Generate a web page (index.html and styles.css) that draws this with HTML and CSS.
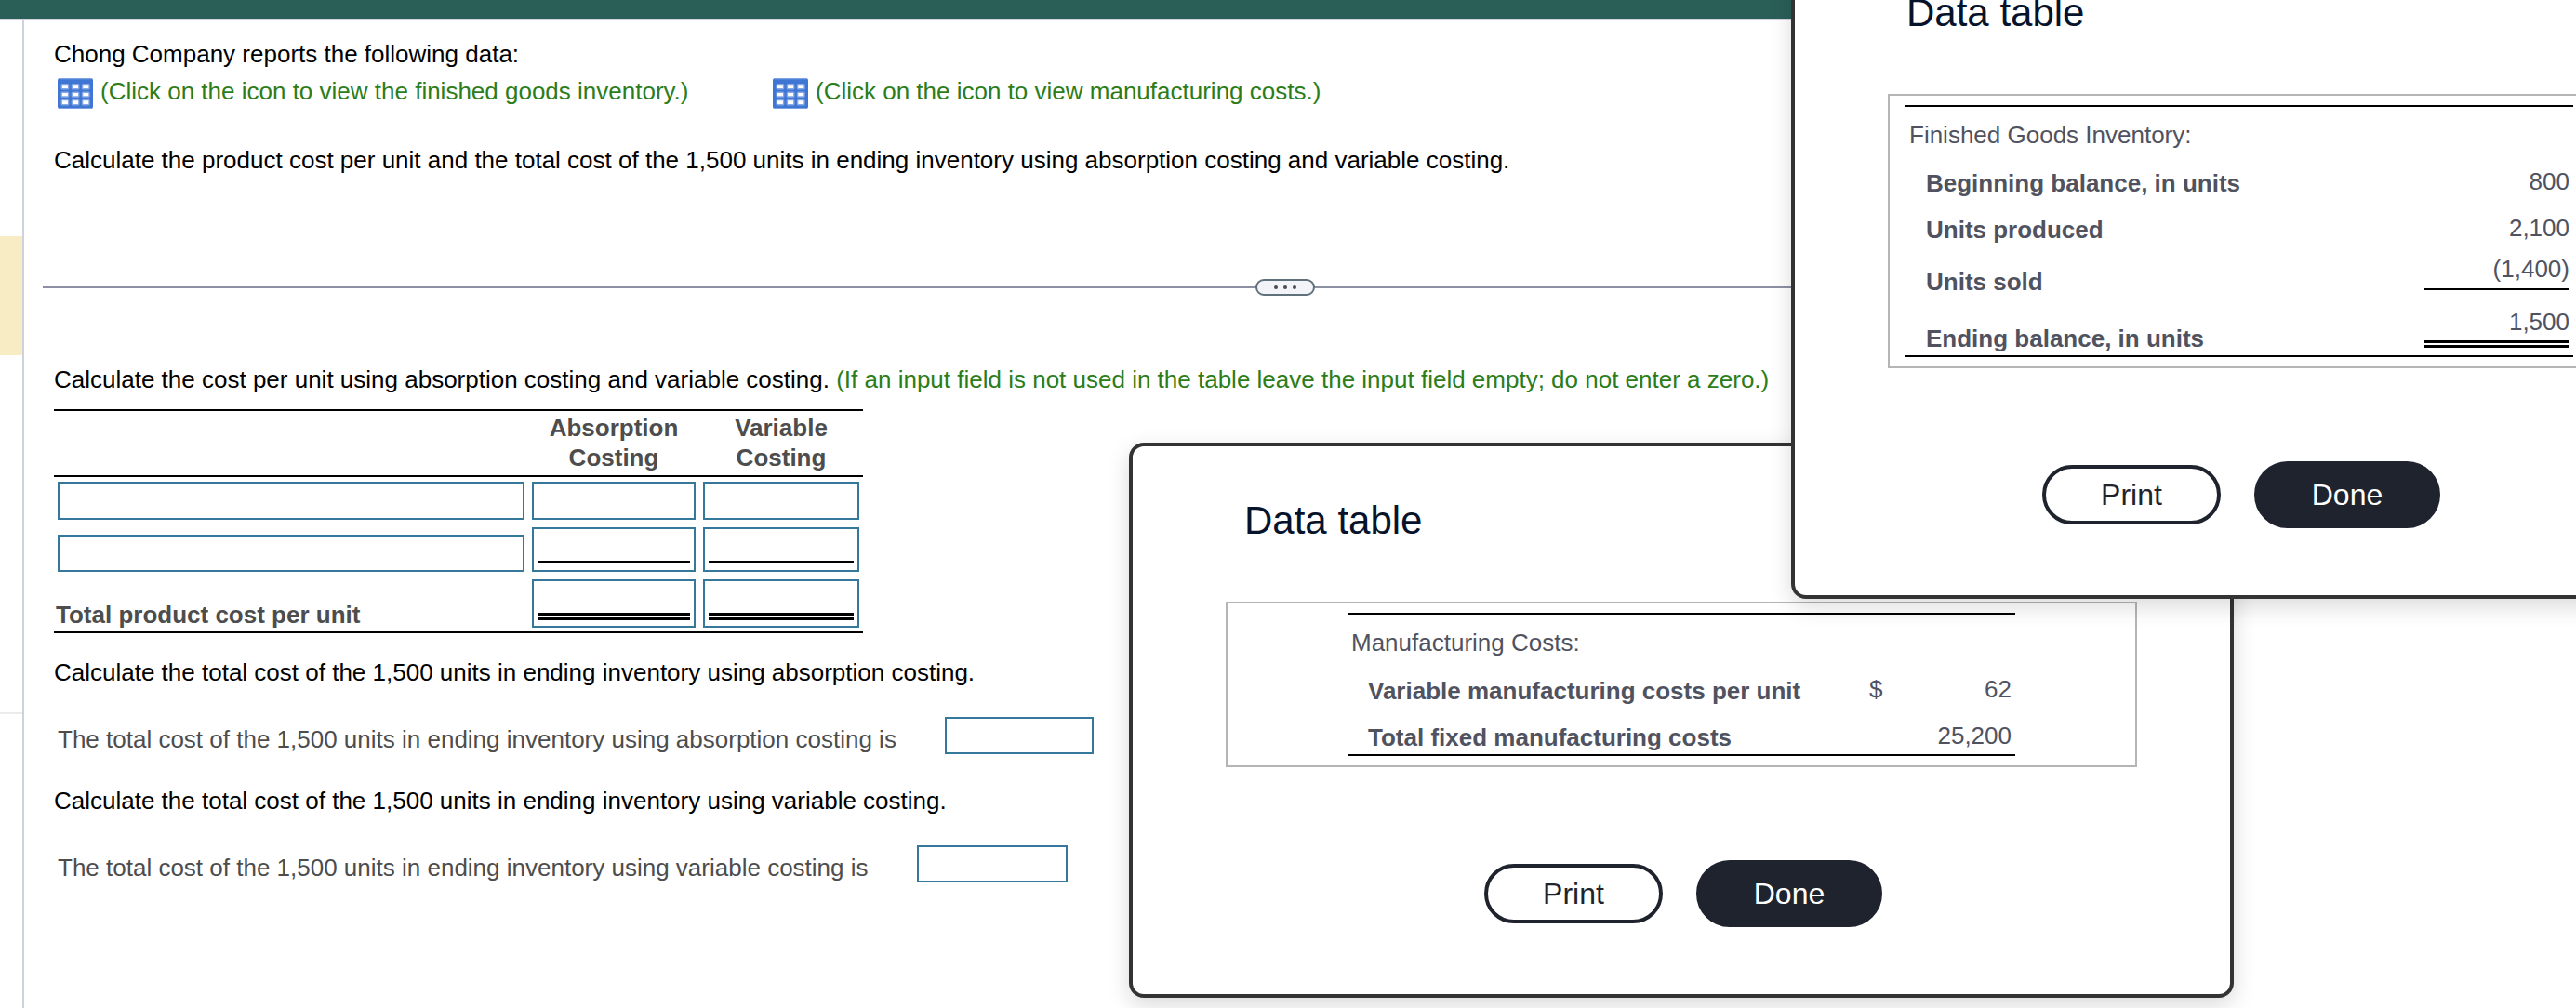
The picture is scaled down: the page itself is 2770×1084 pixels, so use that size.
FILE: index.html
```html
<!DOCTYPE html>
<html lang="en">
<head>
<meta charset="utf-8">
<title>Chong Company</title>
<link rel="stylesheet" href="styles.css">
</head>
<body>
<svg class="defs" width="0" height="0" aria-hidden="true">
  <defs>
    <symbol id="grid-icon" viewBox="0 0 38 33">
      <rect width="38" height="33" rx="2.5" fill="#3f76d4"/>
      <path d="M1.5 .6h35M1.5 32.5h35" stroke="#7da2e4" stroke-width="1.2"/>
      <g fill="#fff" stroke="#86a9e6" stroke-width="1.4">
        <rect x="4.2" y="6.6" width="7.4" height="5.2" rx=".8"/><rect x="15.4" y="6.6" width="7.4" height="5.2" rx=".8"/><rect x="26.6" y="6.6" width="7.4" height="5.2" rx=".8"/>
        <rect x="4.2" y="15.2" width="7.4" height="4.8" rx=".8"/><rect x="15.4" y="15.2" width="7.4" height="4.8" rx=".8"/><rect x="26.6" y="15.2" width="7.4" height="4.8" rx=".8"/>
        <rect x="4.2" y="23.6" width="7.4" height="5.2" rx=".8"/><rect x="15.4" y="23.6" width="7.4" height="5.2" rx=".8"/><rect x="26.6" y="23.6" width="7.4" height="5.2" rx=".8"/>
      </g>
    </symbol>
  </defs>
</svg>
<header class="topbar"></header>
<div class="layout">
  <aside class="rail"><div class="rail-current"></div><div class="rail-rule"></div></aside>
  <main class="main">
    <p class="line intro">Chong Company reports the following data:</p>
    <div class="links">
      <a class="link"><svg class="icon"><use href="#grid-icon"/></svg><span>(Click on the icon to view the finished goods inventory.)</span></a>
      <a class="link"><svg class="icon"><use href="#grid-icon"/></svg><span>(Click on the icon to view manufacturing costs.)</span></a>
    </div>
    <p class="line task">Calculate the product cost per unit and the total cost of the 1,500 units in ending inventory using absorption costing and variable costing.</p>
    <div class="divider"><span class="pill"><i></i><i></i><i></i></span></div>
    <p class="line prompt">Calculate the cost per unit using absorption costing and variable costing. <span class="hint">(If an input field is not used in the table leave the input field empty; do not enter a zero.)</span></p>
    <section class="cost">
      <div class="cost-row cost-head"><span></span><span>Absorption<br>Costing</span><span>Variable<br>Costing</span></div>
      <div class="cost-body">
        <div class="cost-row first"><div class="field"></div><div class="field"></div><div class="field"></div></div>
        <div class="cost-row second"><div class="field short"></div><div class="field sub"><b></b></div><div class="field sub"><b></b></div></div>
        <div class="cost-row third"><span class="total">Total product cost per unit</span><div class="field sum"><b></b></div><div class="field sum"><b></b></div></div>
      </div>
    </section>
    <p class="line after-table">Calculate the total cost of the 1,500 units in ending inventory using absorption costing.</p>
    <div class="answer"><span class="answer-text wide">The total cost of the 1,500 units in ending inventory using absorption costing is</span><div class="field answer-box"></div></div>
    <p class="line after-answer">Calculate the total cost of the 1,500 units in ending inventory using variable costing.</p>
    <div class="answer"><span class="answer-text">The total cost of the 1,500 units in ending inventory using variable costing is</span><div class="field answer-box large"></div></div>
  </main>
</div>

<section class="dialog costs">
  <h2 class="title">Data table</h2>
  <div class="frame">
    <div class="data">
      <div class="row r46"><span class="group">Manufacturing Costs:</span></div>
      <div class="row r52"><span class="label">Variable manufacturing costs per unit</span><span class="value money"><span>$</span><span>62</span></span></div>
      <div class="row r50"><span class="label">Total fixed manufacturing costs</span><span class="value">25,200</span></div>
    </div>
  </div>
  <div class="actions"><button class="btn print">Print</button><button class="btn done">Done</button></div>
</section>

<section class="dialog inventory">
  <h2 class="title">Data table</h2>
  <div class="frame">
    <div class="data">
      <div class="row r46"><span class="group">Finished Goods Inventory:</span></div>
      <div class="row r52"><span class="label">Beginning balance, in units</span><span class="value">800</span></div>
      <div class="row r50"><span class="label">Units produced</span><span class="value">2,100</span></div>
      <div class="row r56"><span class="label">Units sold</span><span class="value single">(1,400)</span></div>
      <div class="row r61"><span class="label">Ending balance, in units</span><span class="value double">1,500</span></div>
    </div>
  </div>
  <div class="actions"><button class="btn print">Print</button><button class="btn done">Done</button></div>
</section>
</body>
</html>
```
FILE: styles.css
```css
* { box-sizing: border-box; }
html, body { height: 1084px; overflow: hidden; }
body {
  margin: 0;
  position: relative;
  display: flex;
  flex-direction: column;
  background: #fff;
  color: #000;
  font: 26px/32px "Liberation Sans", Arial, sans-serif;
  white-space: nowrap;
}
p, h2 { margin: 0; }
.defs { position: absolute; }

.topbar { flex: none; height: 22px; background: #2a5f58; border-bottom: 2px solid #d3d1df; }
.layout { flex: 1; display: flex; }
.rail { flex: none; width: 26px; border-right: 2px solid #ccd2df; }
.rail-current { margin-top: 232px; height: 128px; background: #f8ecc4; }
.rail-rule { margin-top: 384px; height: 2px; background: #ebebed; }
.main { flex: 1; padding: 20px 0 0 32px; }

.links { display: grid; grid-template-columns: 769px auto; justify-content: start; margin: 8px 0 0 4px; height: 32px; color: #2c7d19; }
.link { display: flex; gap: 8px; }
.icon { width: 38px; height: 33px; margin-top: 2px; flex: none; }
.task { margin-top: 42px; }

.divider {
  display: flex;
  align-items: center;
  height: 18px;
  margin: 112px 0 0 -12px;
  padding-left: 1304px;
  background: linear-gradient(#8b91a3, #8b91a3) 0 8px / 100% 2px no-repeat;
}
.pill { display: flex; align-items: center; justify-content: center; gap: 6px; width: 64px; height: 18px; border: 2px solid #60717c; border-radius: 9px; background: #f3f4f7; }
.pill i { width: 4px; height: 4px; border-radius: 50%; background: #4b4b50; }

.prompt { margin-top: 74px; }
.hint { color: #2c7d19; }

.cost { width: 870px; margin-top: 16px; border-top: 2px solid #000; border-bottom: 2px solid #000; color: #4d4d4d; font-weight: bold; }
.cost-row { display: grid; grid-template-columns: 502px 176px 168px; column-gap: 8px; padding: 0 4px; align-items: end; }
.cost-head { padding: 2px 4px 3px; border-bottom: 2px solid #000; text-align: center; }
.cost-body { display: flex; flex-direction: column; gap: 8px; padding: 5px 0 4px; }
.field { border: 2px solid #35789b; background: #fff; }
.first .field { height: 41px; }
.second .field { height: 48px; }
.second .short { height: 40px; }
.third .field { height: 52px; }
.field b { display: block; margin: 0 4px; }
.sub b { height: 36px; border-bottom: 2px solid #000; }
.sum b { height: 42px; border-bottom: 8px double #000; }
.total { margin: 0 0 -2px -2px; }

.after-table { margin-top: 26px; }
.after-answer { margin-top: 34px; }
.answer { display: flex; align-items: flex-end; height: 40px; margin-top: 32px; padding-left: 4px; color: #4d4d4d; }
.answer-text { width: 924px; }
.answer-text.wide { width: 954px; }
.answer-box { width: 160px; height: 40px; }
.answer-box.large { width: 162px; }

.dialog {
  position: absolute;
  padding: 56px 100px 0;
  border: 4px solid #333;
  border-radius: 16px;
  background: #fff;
  box-shadow: 0 8px 24px rgba(0, 0, 0, .15);
  color: #50535f;
}
.costs { left: 1214px; top: 476px; width: 1188px; height: 597px; }
.inventory { left: 1926px; top: -70px; width: 964px; height: 714px; }
.title { margin-left: 20px; font-size: 42px; line-height: 48px; font-weight: normal; color: #07132b; }
.frame { display: flex; justify-content: center; margin-top: 63px; padding: 10px 0; border: 2px solid #b5b5b5; }
.data { width: 718px; border-top: 2px solid #000; border-bottom: 2px solid #000; padding-bottom: 2px; }
.row { display: flex; align-items: flex-end; justify-content: space-between; padding: 0 4px; }
.r46 { height: 46px; }
.r50 { height: 50px; }
.r52 { height: 52px; }
.r56 { height: 56px; }
.r61 { height: 61px; }
.label { padding-left: 18px; font-weight: bold; }
.value { width: 156px; margin-bottom: 2px; text-align: right; }
.money { display: flex; justify-content: space-between; padding-left: 3px; }
.single { margin-bottom: 7px; padding-bottom: 5px; border-bottom: 2px solid #000; }
.double { margin-bottom: 6px; padding-bottom: 4px; border-bottom: 8px double #000; }

.actions { display: flex; align-items: center; justify-content: center; gap: 36px; margin-top: 100px; padding-left: 4px; }
.btn { padding: 0; border: 4px solid #1f232e; border-radius: 36px; font: 32px/40px "Liberation Sans", Arial, sans-serif; }
.print { width: 192px; height: 64px; background: #fff; color: #1f232e; }
.done { width: 200px; height: 72px; background: #1f232e; color: #fff; }
```
